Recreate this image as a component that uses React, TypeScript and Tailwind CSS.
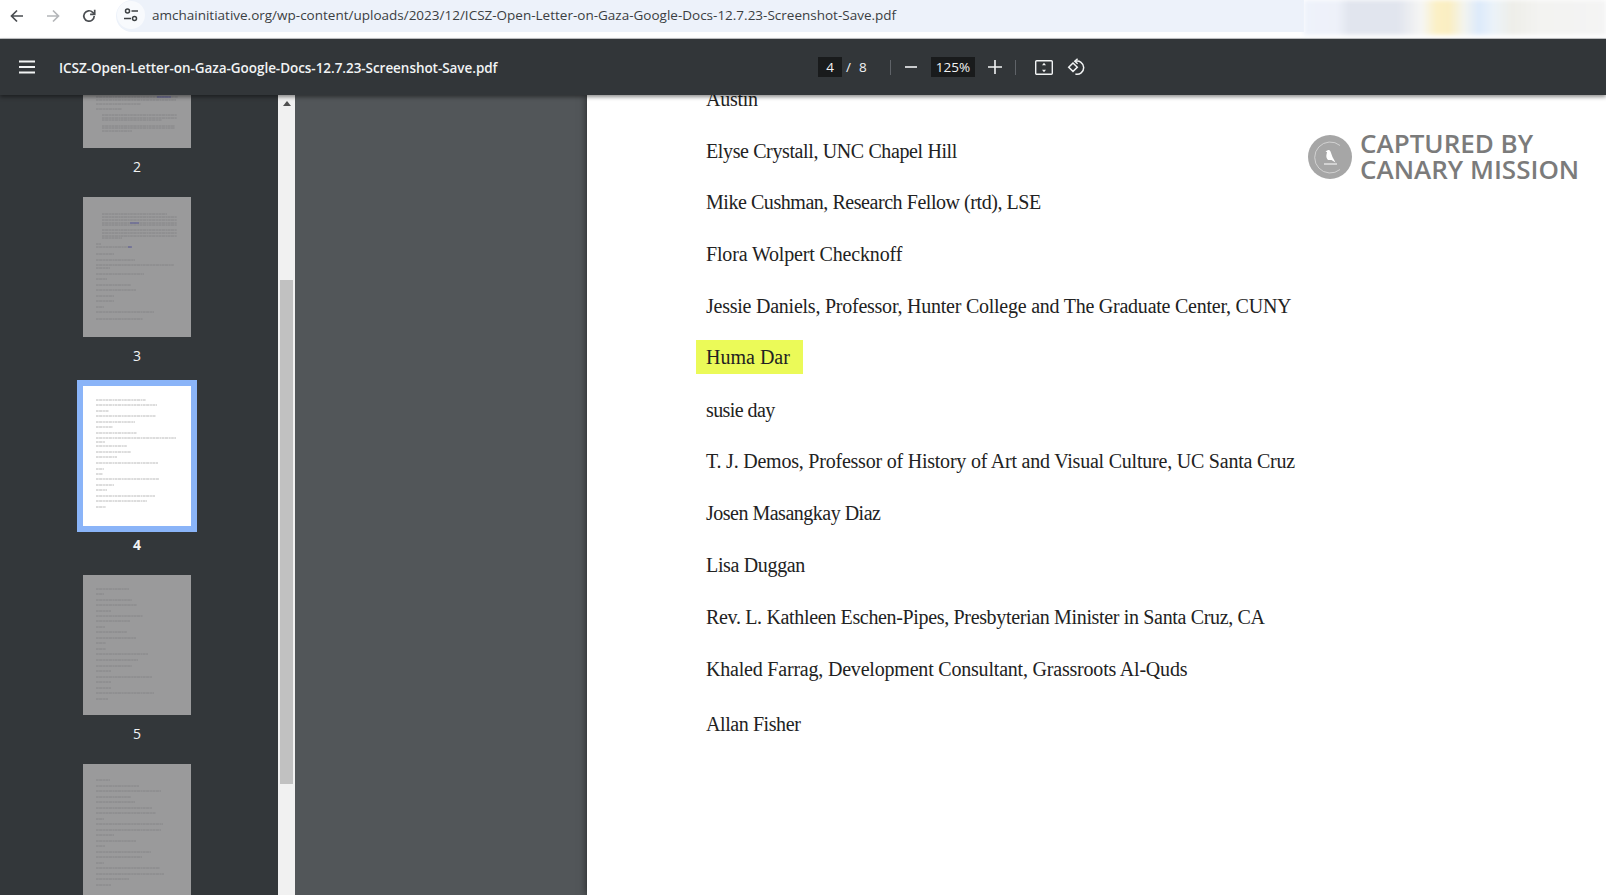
const Bar = ({ rows, links = [], x = 13, color = "#7d7d7f" }: { rows: number[][]; links?: number[][]; x?: number; color?: string }) => (
  <svg viewBox="0 0 108 140" className="absolute inset-0 w-full h-full">
    {rows.map((r, i) => (
      <line key={i} x1={r.length > 2 ? r[2] : x} x2={(r.length > 2 ? r[2] : x) + r[1]} y1={r[0]} y2={r[0]} stroke={color} strokeWidth="0.8" strokeDasharray="2.6 0.5 3.4 0.6 1.8 0.5" />
    ))}
    {links.map((r, i) => (
      <line key={i} x1={r[2]} x2={r[2] + r[1]} y1={r[0]} y2={r[0]} stroke="#55559a" strokeWidth="0.9" />
    ))}
  </svg>
);

const pages = [
  {
    n: 2,
    rows: [[89,82],[92,80],[96,45],[101,26],[107,75,19],[110,75,19],[112,60,19],[118,73,19],[120,73,19],[123,30,19]],
    links: [[89,14,74]],
  },
  {
    n: 3,
    rows: [[17,65,19],[20,75,19],[23,75,19],[26,75,19],[28,75,19],[33,75,19],[36,75,19],[39,75,19],[41,20,19],[47,5],[50,35],[57,18],[63,39],[68,78],[71,14],[77,48],[82,11],[88,35],[93,40],[99,18],[104,18],[110,8],[115,58],[122,47]],
    links: [[26,9,47],[50,4,45]],
  },
  {
    n: 4,
    active: true,
    rows: [[14,50],[19,61],[25,13],[30,60],[36,39],[41,17],[47,41],[52,80],[56,9],[60,31],[66,35],[71,21],[77,62],[83,8],[88,7],[93,63],[99,18],[104,11],[110,59],[115,51],[121,10]],
  },
  {
    n: 5,
    rows: [[14,33],[19,8],[25,36],[30,41],[36,15],[41,47],[46,34],[52,9],[57,31],[63,40],[68,10],[74,10],[79,52],[85,42],[91,36],[96,15],[102,56],[107,15],[113,15],[118,58],[124,12]],
  },
  {
    n: 6,
    hideLabel: true,
    rows: [[16,14],[22,43],[27,65],[33,35],[38,39],[44,56],[49,60],[55,8],[60,67],[66,65],[71,18],[77,40],[82,9],[88,55],[93,46],[99,8],[104,64],[110,68],[115,33],[121,15]],
  },
];

const names = [
  { t: "Austin", c: "tracking-[-0.25px]" },
  { t: "Elyse Crystall, UNC Chapel Hill", c: "tracking-[-0.38px]" },
  { t: "Mike Cushman, Research Fellow (rtd), LSE", c: "tracking-[-0.45px]" },
  { t: "Flora Wolpert Checknoff", c: "tracking-[-0.16px]" },
  { t: "Jessie Daniels, Professor, Hunter College and The Graduate Center, CUNY", c: "tracking-[-0.24px]" },
  { t: "Huma Dar", c: "tracking-[0px]" },
  { t: "susie day", c: "tracking-[-0.58px]" },
  { t: "T. J. Demos, Professor of History of Art and Visual Culture, UC Santa Cruz", c: "tracking-[-0.22px]" },
  { t: "Josen Masangkay Diaz", c: "tracking-[-0.5px]" },
  { t: "Lisa Duggan", c: "tracking-[-0.34px]" },
  { t: "Rev. L. Kathleen Eschen-Pipes, Presbyterian Minister in Santa Cruz, CA", c: "tracking-[-0.34px]" },
  { t: "Khaled Farrag, Development Consultant, Grassroots Al-Quds", c: "tracking-[-0.2px]" },
];

export default function App() {
  return (
    <div className="w-[1606px] h-[895px] flex flex-col overflow-hidden bg-white font-['Open_Sans',sans-serif]">
      {/* browser chrome */}
      <div className="relative h-[39px] shrink-0 bg-white border-b border-[#c4c6c8] flex items-start">
        <div className="w-[116px] h-[31px] flex items-center shrink-0">
          <svg width="16" height="16" viewBox="0 0 16 16" fill="none" stroke="#4a4d51" strokeWidth="1.7" className="ml-[9px]">
            <path d="M14 8H3M8 2.5 2.5 8 8 13.5" />
          </svg>
          <svg width="16" height="16" viewBox="0 0 16 16" fill="none" stroke="#b4b6b9" strokeWidth="1.7" className="ml-[20px]">
            <path d="M2 8h11M8 2.5 13.5 8 8 13.5" />
          </svg>
          <svg width="16" height="16" viewBox="0 0 16 16" fill="none" stroke="#4a4d51" strokeWidth="1.7" className="ml-[20px]">
            <path d="M13.2 8a5.2 5.2 0 1 1-1.5-3.7L13.5 6" />
            <path d="M13.7 1.8v4.6H9.1" />
          </svg>
        </div>
        <div className="h-[32px] w-[1188px] bg-[#edf2fa] rounded-l-[16px] flex items-center shrink-0">
          <div className="w-[28px] h-[28px] rounded-full bg-[#f8fafd] flex items-center justify-center shrink-0 ml-[1px] mt-[-2px]">
            <svg width="16" height="16" viewBox="0 0 16 16" fill="none" stroke="#3c4043" strokeWidth="1.5">
              <circle cx="4.5" cy="4" r="2" />
              <path d="M8.5 4H15M1 11.5h7" />
              <circle cx="11.5" cy="11.5" r="2" />
            </svg>
          </div>
          <span className="ml-[7px] text-[13.5px] leading-[28px] mt-[-2px] text-[#3b3e42] whitespace-nowrap font-['Open_Sans',sans-serif] tracking-[0px]">
            amchainitiative.org/wp-content/uploads/2023/12/ICSZ-Open-Letter-on-Gaza-Google-Docs-12.7.23-Screenshot-Save.pdf
          </span>
        </div>
        <div className="h-[35px] flex-1 bg-[linear-gradient(90deg,#eef2fb_0%,#eef1f9_11%,#e1e5ee_15%,#e1e5ee_31%,#f6f6f4_39%,#fbf0c4_44%,#faeec2_48%,#f3f4ef_53%,#dceafb_58%,#ecf3f8_63%,#eeeee9_69%,#f3f3f1_78%,#f4f4f4_100%)] blur-[2px]" />
      </div>

      {/* pdf toolbar */}
      <div className="relative z-10 h-[56px] shrink-0 bg-[#323639] shadow-[0_2px_4px_rgba(0,0,0,0.45)] flex items-center text-[#f1f3f4]">
        <svg width="16" height="14" viewBox="0 0 16 14" stroke="#f1f3f4" strokeWidth="2" className="ml-[19px] shrink-0">
          <path d="M0 1.5h16M0 7h16M0 12.5h16" />
        </svg>
        <span className="ml-[24px] w-[759px] shrink-0 text-[13.5px] font-semibold whitespace-nowrap tracking-[-0.05px] mt-[2px]">
          ICSZ-Open-Letter-on-Gaza-Google-Docs-12.7.23-Screenshot-Save.pdf
        </span>
        <span className="w-[24px] h-[20px] bg-[#191b1c] text-[13.5px] leading-[20px] text-center shrink-0">4</span>
        <span className="ml-[4px] text-[13.5px] w-[12px]">/</span>
        <span className="ml-[1px] text-[13.5px] w-[8px]">8</span>
        <span className="ml-[23px] w-px h-[15px] bg-[#5f6368] shrink-0" />
        <svg width="12" height="12" viewBox="0 0 12 12" stroke="#f1f3f4" strokeWidth="1.6" className="ml-[14px] shrink-0">
          <path d="M0 6h12" />
        </svg>
        <span className="ml-[14px] w-[44px] h-[20px] bg-[#191b1c] text-[13.5px] leading-[20px] text-center shrink-0">125%</span>
        <svg width="14" height="14" viewBox="0 0 14 14" stroke="#f1f3f4" strokeWidth="1.6" className="ml-[13px] shrink-0">
          <path d="M0 7h14M7 0v14" />
        </svg>
        <span className="ml-[13px] w-px h-[15px] bg-[#5f6368] shrink-0" />
        <svg width="18" height="15" viewBox="0 0 18 15" fill="none" stroke="#f1f3f4" strokeWidth="1.4" className="ml-[19px] shrink-0">
          <rect x="0.7" y="0.7" width="16.6" height="13.6" rx="1" />
          <path d="M9 2.8 11 5.2H7zM9 12.2 11 9.8H7z" fill="#f1f3f4" stroke="none" />
        </svg>
        <svg width="18" height="18" viewBox="0 0 18 18" fill="none" stroke="#f1f3f4" strokeWidth="1.5" className="ml-[14px] shrink-0">
          <path d="M6 5l-4.300 4.200L6 13.400l4.300-4.200z" />
          <path d="M8.200 3.300A6.600 6.600 0 1 1 8.400 16" />
          <path d="M10.600.8 7.800 3.300l2.800 2.500" />
        </svg>
      </div>

      {/* body */}
      <div className="flex-1 flex min-h-0">
        {/* sidebar */}
        <div className="w-[278px] shrink-0 bg-[#33373a] overflow-hidden">
          <div className="-mt-[87px] w-[274px] flex flex-col items-center">
            {pages.map((p) => (
              <div key={p.n} className="flex flex-col items-center h-[189px]">
                <div className={`relative w-[108px] h-[140px] shrink-0 ${p.active ? "bg-white ring-[6px] ring-[#8ab4f8]" : "bg-[#9a9a9b]"}`}>
                  <Bar rows={p.rows} links={p.links} color={p.active ? "#a8a8a8" : "#808083"} />
                </div>
                {!p.hideLabel && (
                  <span className={`mt-[10px] text-[14px] leading-[18px] text-[#f1f3f4] ${p.active ? "font-bold" : ""}`}>{p.n}</span>
                )}
              </div>
            ))}
          </div>
        </div>

        {/* scrollbar */}
        <div className="w-[17px] shrink-0 bg-[#f1f1f1] flex flex-col items-center">
          <svg width="8" height="5" viewBox="0 0 8 5" className="mt-[6px] shrink-0">
            <path d="M4 0 8 5H0z" fill="#505050" />
          </svg>
          <div className="mt-[174px] w-[13px] h-[504px] bg-[#c1c1c1]" />
        </div>

        {/* viewer */}
        <div className="flex-1 bg-[#525659] pl-[292px] min-w-0 overflow-hidden">
          <div className="relative h-full bg-white shadow-[0_0_8px_rgba(0,0,0,0.6)] pl-[119px] font-['Liberation_Serif',serif] text-[#222222] text-[20px] leading-[28px] overflow-hidden">
            <div className="flex flex-col -mt-[22px]">
              {names.map(({ t, c }) => (
                <div key={t} className={`h-[51.8px] flex items-center whitespace-nowrap ${c}`}>
                  {t === "Huma Dar" ? (
                    <span className="bg-[#ebfa58] -ml-[10px] pl-[10px] pr-[13px] py-[3px] -mt-[1px]">{t}</span>
                  ) : (
                    t
                  )}
                </div>
              ))}
              <div className="h-[51.8px] mt-[4px] flex items-center whitespace-nowrap tracking-[-0.42px]">Allan Fisher</div>
            </div>

            <div className="absolute left-[721px] top-[37px] flex items-center gap-[8px] tracking-normal">
              <svg width="44" height="44" viewBox="0 0 44 44">
                <circle cx="22" cy="22" r="22" fill="#a6a6a6" />
                <path d="M32 10.500A15.500 15.500 0 1 0 32 34.500" fill="none" stroke="#dcdcdc" strokeWidth="0.8" />
                <path d="M19 15.500c1.500-1 3-.5 3.500 1l2 5.500 3 5.500-4-2.500-3.500 0c-1.500-1.500-2-3.500-1.500-5.500l.5-2.500-1.500-.3z" fill="#fff" />
                <path d="M16 29h13" stroke="#fff" strokeWidth="1" />
              </svg>
              <div className="text-[#7b7b7b] text-[26px] leading-[26px] font-semibold font-['Open_Sans',sans-serif] whitespace-nowrap mt-[-2px]">
                CAPTURED BY
                <br />
                CANARY MISSION
              </div>
            </div>
          </div>
        </div>
      </div>
    </div>
  );
}
